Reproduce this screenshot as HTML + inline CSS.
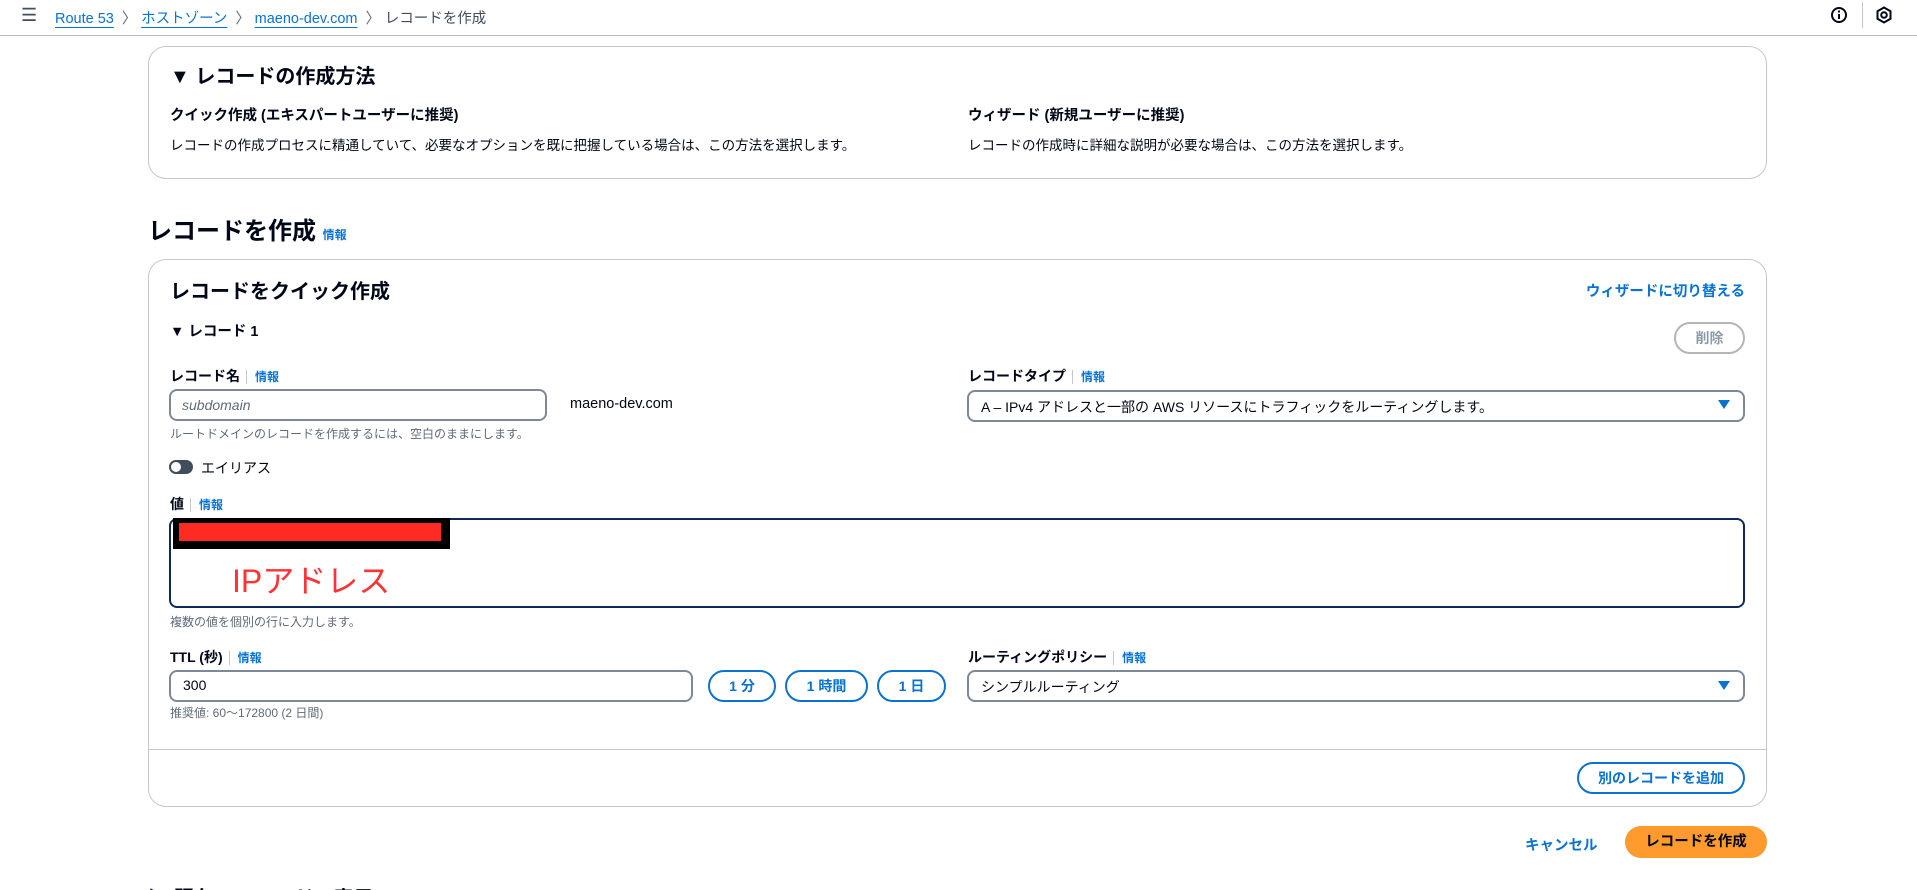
<!DOCTYPE html>
<html><head><meta charset="utf-8"><style>
*{box-sizing:border-box;margin:0;padding:0}
html,body{width:1917px;height:890px;overflow:hidden}
body{background:#fff;font-family:"Liberation Sans","Noto Sans CJK JP",sans-serif;color:#000716;position:relative;font-size:14px}
.a{position:absolute;white-space:nowrap}
.top{position:absolute;left:0;top:0;width:1917px;height:36px;border-bottom:1px solid #b6bec9}
.lnk{color:#0972d3}
.bc{color:#0972d3;text-decoration:underline;text-underline-offset:4px;font-size:14.5px}
.sep{color:#5f6b7a;font-size:15px}
.panel{position:absolute;border:1px solid #c6c6cd;border-radius:18px}
.b{font-weight:bold}
.info{color:#0972d3;font-size:12px;font-weight:bold;border-left:1px solid #c6c6cd;padding-left:8px;margin-left:6px}
.inp{position:absolute;border:2px solid #7d8998;border-radius:8px;background:#fff;height:32px}
.btn{position:absolute;border:2px solid #0972d3;border-radius:18px;color:#0972d3;font-weight:bold;text-align:center;font-size:14px}
.hint{color:#5f6b7a;font-size:12px}
.tri{position:absolute;width:0;height:0;border-left:6px solid transparent;border-right:6px solid transparent;border-top:9px solid #0972d3}
</style></head><body>
<div class="top"></div>
<div class="a" style="left:21px;top:5px;font-size:18px;color:#414d5c">&#9776;</div>
<div class="a" style="left:55px;top:7px"><span class="bc">Route 53</span> <span class="sep">&nbsp;〉&nbsp;</span><span class="bc">ホストゾーン</span> <span class="sep">&nbsp;〉&nbsp;</span><span class="bc">maeno-dev.com</span> <span class="sep">&nbsp;〉&nbsp;</span><span style="font-size:14.5px;color:#414d5c">レコードを作成</span></div>
<svg class="a" style="left:1830px;top:6px" width="18" height="18" viewBox="0 0 18 18"><circle cx="9" cy="9" r="7" fill="none" stroke="#000716" stroke-width="2"/><rect x="8" y="8" width="2" height="5" fill="#000716"/><rect x="8" y="4.5" width="2" height="2" fill="#000716"/></svg>
<div class="a" style="left:1862px;top:2px;width:1px;height:26px;background:#c6c6cd"></div>
<svg class="a" style="left:1875px;top:6px" width="18" height="18" viewBox="0 0 18 18"><path d="M9 1.5 L15.5 5.2 V12.8 L9 16.5 L2.5 12.8 V5.2 Z" fill="none" stroke="#000716" stroke-width="2"/><circle cx="9" cy="9" r="2.8" fill="none" stroke="#000716" stroke-width="2"/></svg>

<div class="panel" style="left:148px;top:46px;width:1619px;height:133px"></div>
<div class="a b" style="left:170px;top:60px;font-size:20px">▼ レコードの作成方法</div>
<div class="a b" style="left:170px;top:104px;font-size:14.5px">クイック作成 (エキスパートユーザーに推奨)</div>
<div class="a" style="left:170px;top:134px;font-size:13.5px">レコードの作成プロセスに精通していて、必要なオプションを既に把握している場合は、この方法を選択します。</div>
<div class="a b" style="left:968px;top:104px;font-size:14.5px">ウィザード (新規ユーザーに推奨)</div>
<div class="a" style="left:968px;top:134px;font-size:13.5px">レコードの作成時に詳細な説明が必要な場合は、この方法を選択します。</div>

<div class="a b" style="left:148px;top:211px;font-size:24px">レコードを作成 <span style="color:#0972d3;font-size:12px">情報</span></div>

<div class="panel" style="left:148px;top:259px;width:1619px;height:548px"></div>
<div class="a" style="left:149px;top:749px;width:1617px;height:1px;background:#c6c6cd"></div>
<div class="a b" style="left:170px;top:275px;font-size:20px">レコードをクイック作成</div>
<div class="a b lnk" style="right:172px;top:280px;font-size:14.5px">ウィザードに切り替える</div>
<div class="a b" style="left:170px;top:320px;font-size:14.5px">▼ レコード 1</div>
<div class="a" style="left:1674px;top:322px;width:71px;height:32px;border:2px solid #b4b4bb;border-radius:16px;color:#8d99a8;text-align:center;line-height:28px;font-weight:bold">削除</div>

<div class="a b" style="left:170px;top:366px;font-size:14px">レコード名<span class="info">情報</span></div>
<div class="inp" style="left:169px;top:389px;width:378px"></div>
<div class="a" style="left:182px;top:397px;font-style:italic;color:#5f6b7a">subdomain</div>
<div class="a" style="left:570px;top:396px;font-size:14.5px">maeno-dev.com</div>
<div class="a hint" style="left:170px;top:425px">ルートドメインのレコードを作成するには、空白のままにします。</div>

<div class="a b" style="left:968px;top:366px;font-size:14px">レコードタイプ<span class="info">情報</span></div>
<div class="inp" style="left:967px;top:390px;width:778px"></div>
<div class="a" style="left:981px;top:397px;font-size:14px">A – IPv4 アドレスと一部の AWS リソースにトラフィックをルーティングします。</div>
<div class="tri" style="left:1718px;top:400px"></div>

<div class="a" style="left:169px;top:460px;width:24px;height:14px;border-radius:7px;background:#414d5c"></div>
<div class="a" style="left:171px;top:462px;width:10px;height:10px;border-radius:5px;background:#fff"></div>
<div class="a" style="left:201px;top:458px;font-size:14px">エイリアス</div>

<div class="a b" style="left:170px;top:494px;font-size:14px">値<span class="info">情報</span></div>
<div class="a" style="left:169px;top:518px;width:1576px;height:90px;border:2px solid #0f2a5a;border-radius:8px"></div>
<div class="a" style="left:173px;top:518px;width:277px;height:31px;background:#000"></div>
<div class="a" style="left:179px;top:523px;width:262px;height:18px;background:#ff2a22"></div>
<div class="a" style="left:232px;top:556px;font-size:32px;color:#ff3333">IPアドレス</div>
<div class="a hint" style="left:170px;top:613px">複数の値を個別の行に入力します。</div>

<div class="a b" style="left:170px;top:647px;font-size:14px">TTL (秒)<span class="info">情報</span></div>
<div class="inp" style="left:169px;top:670px;width:524px"></div>
<div class="a" style="left:183px;top:677px">300</div>
<div class="btn" style="left:708px;top:670px;width:68px;height:32px;line-height:28px">1 分</div>
<div class="btn" style="left:785px;top:670px;width:83px;height:32px;line-height:28px">1 時間</div>
<div class="btn" style="left:877px;top:670px;width:69px;height:32px;line-height:28px">1 日</div>
<div class="a hint" style="left:170px;top:704px">推奨値: 60〜172800 (2 日間)</div>

<div class="a b" style="left:968px;top:647px;font-size:14px">ルーティングポリシー<span class="info">情報</span></div>
<div class="inp" style="left:967px;top:670px;width:778px"></div>
<div class="a" style="left:981px;top:677px">シンプルルーティング</div>
<div class="tri" style="left:1718px;top:681px"></div>

<div class="btn" style="left:1577px;top:762px;width:168px;height:32px;line-height:28px">別のレコードを追加</div>
<div class="a b lnk" style="left:1525px;top:834px;font-size:14.5px">キャンセル</div>
<div class="a b" style="left:1625px;top:826px;width:142px;height:32px;border-radius:16px;background:#ff9a2e;text-align:center;line-height:32px;font-size:14.5px">レコードを作成</div>
<div class="a b" style="left:148px;top:882px;font-size:20px">▶ 既存のレコードの表示</div>
</body></html>
